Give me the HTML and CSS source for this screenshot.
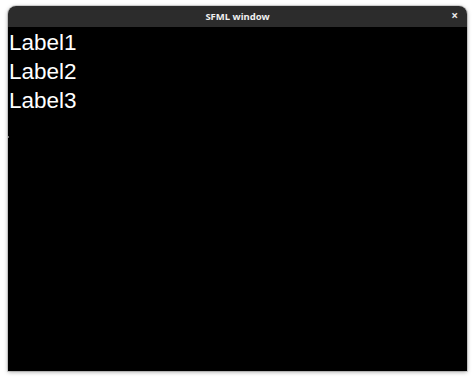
FILE: index.html
```html
<!DOCTYPE html>
<html>
<head>
<meta charset="utf-8">
<link rel="stylesheet" href="styles.css">
</head>
<body>
<div class="window">
  <div class="titlebar">
    <span class="title">SFML window</span>
    <span class="close">×</span>
  </div>
  <div class="content">
    <div class="label">Label1</div>
    <div class="label">Label2</div>
    <div class="label">Label3</div>
    <div class="dot"></div>
  </div>
</div>
</body>
</html>
```

FILE: styles.css
```css
html, body {
  margin: 0;
  padding: 0;
  background: #ffffff;
}
body {
  width: 474px;
  height: 381px;
  overflow: hidden;
}
.window {
  margin: 6px 0 0 8px;
  width: 459px;
  height: 365px;
  display: flex;
  flex-direction: column;
  border-radius: 8px 8px 0 0;
  box-shadow: 0 1px 4px rgba(0, 0, 0, 0.35), 0 0 0 1px rgba(0, 0, 0, 0.12);
  overflow: hidden;
}
.titlebar {
  height: 21px;
  background: #2c2c2c;
  position: relative;
  display: flex;
  align-items: center;
  justify-content: center;
  font-family: "Noto Sans", "DejaVu Sans", sans-serif;
  color: #f0f0f0;
}
.title {
  font-size: 9.5px;
  font-weight: bold;
}
.close {
  position: absolute;
  right: 9px;
  top: 3px;
  font-size: 12px;
  font-weight: bold;
  line-height: 14px;
  color: #e8e8e8;
}
.content {
  flex: 1;
  background: #000000;
  padding: 1px 0 0 1px;
  font-family: "Liberation Sans", Arial, sans-serif;
  color: #ffffff;
  position: relative;
}
.label {
  font-size: 22.5px;
  line-height: 29px;
  height: 29px;
}
.dot {
  position: absolute;
  left: -1px;
  top: 109px;
  width: 2px;
  height: 2px;
  background: #777;
}
```
